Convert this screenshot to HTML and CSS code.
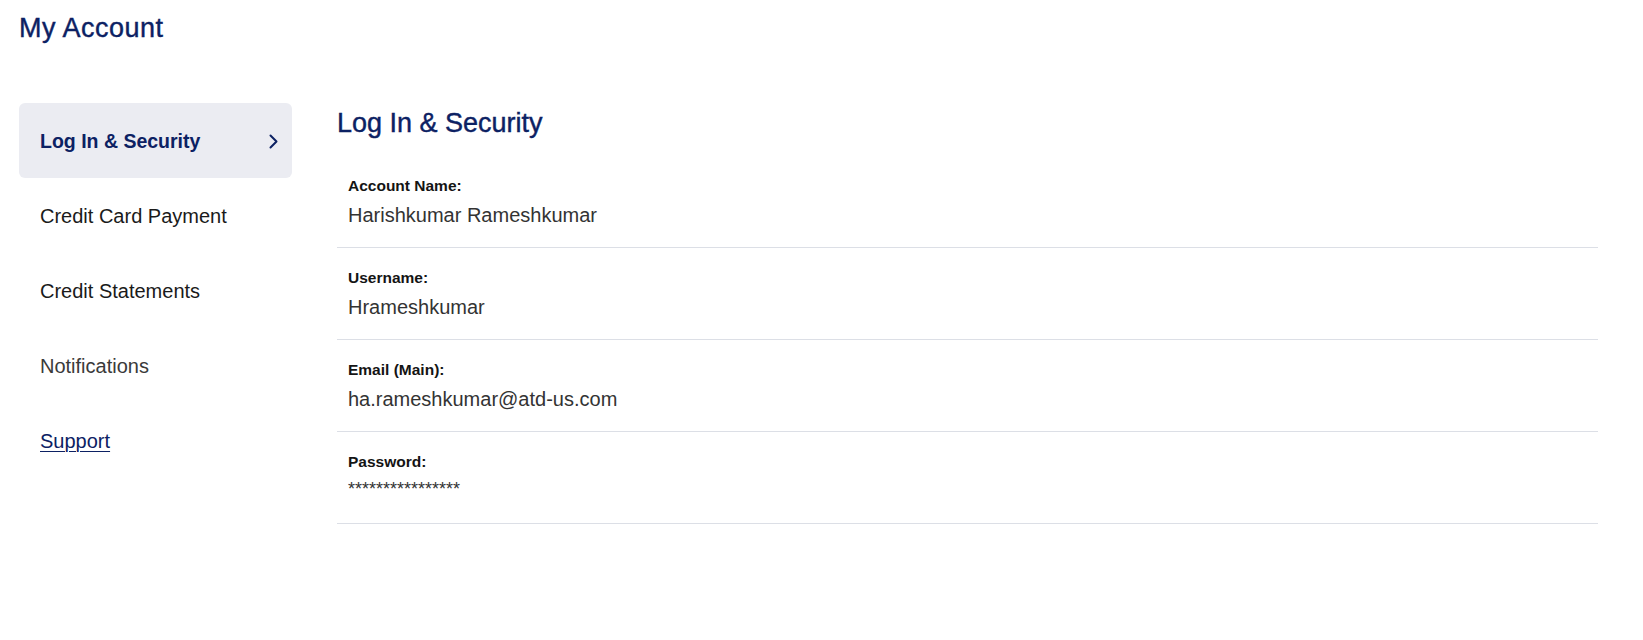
FILE: index.html
```html
<!DOCTYPE html>
<html lang="en">
<head>
<meta charset="utf-8">
<title>My Account</title>
<link rel="stylesheet" href="styles.css">
</head>
<body>
<div class="page">
  <h1 class="page-title">My Account</h1>
  <div class="layout">
    <nav class="sidebar">
      <a class="nav-item active" href="#">
        <span>Log In &amp; Security</span>
        <svg class="chevron" width="9" height="15" viewBox="0 0 9 15"><polyline points="1.5,1.5 7.5,7.5 1.5,13.5" fill="none" stroke="currentColor" stroke-width="2" stroke-linecap="round" stroke-linejoin="round"/></svg>
      </a>
      <a class="nav-item" href="#"><span>Credit Card Payment</span></a>
      <a class="nav-item" href="#"><span>Credit Statements</span></a>
      <a class="nav-item muted" href="#"><span>Notifications</span></a>
      <a class="nav-item link" href="#"><span>Support</span></a>
    </nav>
    <main class="content">
      <h2 class="section-title">Log In &amp; Security</h2>
      <div class="rows">
        <div class="row">
          <div class="label">Account Name:</div>
          <div class="value">Harishkumar Rameshkumar</div>
        </div>
        <div class="row">
          <div class="label">Username:</div>
          <div class="value">Hrameshkumar</div>
        </div>
        <div class="row">
          <div class="label">Email (Main):</div>
          <div class="value">ha.rameshkumar@atd-us.com</div>
        </div>
        <div class="row">
          <div class="label">Password:</div>
          <div class="value password">****************</div>
        </div>
      </div>
    </main>
  </div>
</div>
</body>
</html>
```

FILE: styles.css
```css
* { box-sizing: border-box; }

html, body {
  margin: 0;
  padding: 0;
  background: #ffffff;
  font-family: "Liberation Sans", Arial, Helvetica, sans-serif;
}

.page {
  padding: 12px 45px 40px 19px;
}

.page-title {
  margin: 0;
  font-size: 27px;
  line-height: 32px;
  font-weight: 400;
  letter-spacing: 0.5px;
  color: #0c2163;
  -webkit-text-stroke: 0.4px #0c2163;
}

.layout {
  display: flex;
  align-items: flex-start;
  gap: 45px;
  margin-top: 59px;
}

.sidebar {
  width: 273px;
  flex: none;
  display: flex;
  flex-direction: column;
}

.nav-item {
  height: 75px;
  display: flex;
  align-items: center;
  justify-content: space-between;
  padding: 1px 14px 0 21px;
  border-radius: 6px;
  font-size: 20px;
  color: #1a1a1a;
  text-decoration: none;
}

.nav-item.active {
  background: #ebecf2;
  color: #0c2163;
  font-weight: 700;
  font-size: 19.5px;
}

.nav-item.muted {
  color: #3a3a3a;
}

.nav-item.link {
  color: #0c2163;
}

.nav-item.link span {
  text-decoration: underline;
  text-underline-offset: 3px;
  text-decoration-thickness: 1px;
}

.chevron {
  color: #0c2163;
  display: block;
}

.content {
  flex: 1;
  padding-top: 4px;
}

.section-title {
  margin: 0 0 37px 0;
  font-size: 27px;
  line-height: 32px;
  font-weight: 400;
  color: #0c2163;
  -webkit-text-stroke: 0.4px #0c2163;
}

.rows {
  display: flex;
  flex-direction: column;
}

.row {
  padding: 0 11px 18px 11px;
  border-bottom: 1px solid #dcdfe6;
}

.row + .row {
  padding-top: 20px;
}

.label {
  font-size: 15.5px;
  line-height: 20px;
  font-weight: 700;
  color: #141414;
}

.value {
  margin-top: 5px;
  font-size: 20px;
  line-height: 28px;
  color: #333333;
}

.value.password {
  font-size: 18px;
  line-height: 24px;
  margin-bottom: 4px;
  color: #333333;
}
```
